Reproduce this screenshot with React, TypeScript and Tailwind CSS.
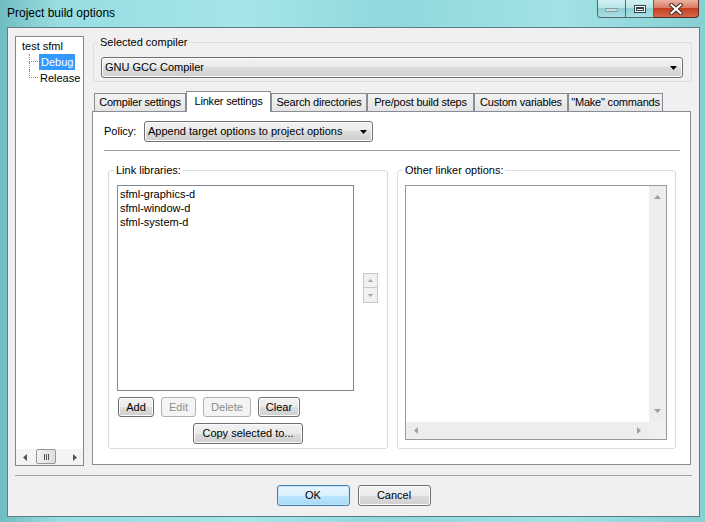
import React from "react";

const F = "font-['Liberation_Sans',Arial,sans-serif]";

function Tri({ dir, color = "#000", w = 7, h = 4 }: { dir: "up" | "down" | "left" | "right"; color?: string; w?: number; h?: number }) {
  if (dir === "down")
    return (
      <svg width={w} height={h} viewBox={`0 0 ${w} ${h}`}>
        <polygon points={`0,0 ${w},0 ${w / 2},${h}`} fill={color} />
      </svg>
    );
  if (dir === "up")
    return (
      <svg width={w} height={h} viewBox={`0 0 ${w} ${h}`}>
        <polygon points={`0,${h} ${w},${h} ${w / 2},0`} fill={color} />
      </svg>
    );
  if (dir === "left")
    return (
      <svg width={h} height={w} viewBox={`0 0 ${h} ${w}`}>
        <polygon points={`${h},0 ${h},${w} 0,${w / 2}`} fill={color} />
      </svg>
    );
  return (
    <svg width={h} height={w} viewBox={`0 0 ${h} ${w}`}>
      <polygon points={`0,0 0,${w} ${h},${w / 2}`} fill={color} />
    </svg>
  );
}

function Btn({ children, className = "", disabled = false }: { children: React.ReactNode; className?: string; disabled?: boolean }) {
  return (
    <div
      className={`flex items-center justify-center rounded-[3px] border text-[11px] leading-none ${
        disabled
          ? "border-[#adb2b5] bg-[#f4f4f4] text-[#8d8d8d]"
          : "border-[#707070] bg-[linear-gradient(#f2f2f2_0%,#ebebeb_50%,#dddddd_50%,#cfcfcf_100%)] text-black shadow-[inset_0_0_0_1px_#fbfbfb]"
      } ${className}`}
    >
      {children}
    </div>
  );
}

function Combo({ text, className = "" }: { text: string; className?: string }) {
  return (
    <div
      className={`flex h-[21px] items-center justify-between rounded-[3px] border border-[#707070] bg-[linear-gradient(#f2f2f2_0%,#ebebeb_50%,#dddddd_50%,#cfcfcf_100%)] pl-[3px] pr-[5px] shadow-[inset_0_0_0_1px_#fbfbfb] ${className}`}
    >
      <span className="text-[11px] leading-none">{text}</span>
      <Tri dir="down" />
    </div>
  );
}

function Tab({ children, className = "" }: { children: React.ReactNode; className?: string }) {
  return (
    <div
      className={`flex h-[18px] items-center justify-center whitespace-nowrap border border-b-0 border-[#898c95] bg-[linear-gradient(#f3f3f3,#e4e4e4)] text-[11px] leading-none tracking-[-0.2px] ${className}`}
    >
      {children}
    </div>
  );
}

export default function App() {
  return (
    <div
      className={`${F} flex h-[522px] w-[705px] flex-col overflow-hidden bg-[linear-gradient(90deg,#6fbcc1_0%,#98dde0_8%,#a6e5e8_35%,#8fd8dc_55%,#a3e2e5_80%,#86cfd3_100%)] text-black`}
    >
      {/* Title bar */}
      <div className="flex h-[27px] shrink-0">
        <div className="pl-[7px] pt-[5px] text-[12px] leading-[16px] text-black">Project build options</div>
        <div className="ml-auto mr-[6px] flex h-[18px]">
          <div className="flex w-[57px] overflow-hidden rounded-bl-[4px] border border-t-0 border-[#4c6b6e] bg-[linear-gradient(#d3f1f3_0%,#b4e3e6_50%,#92d0d4_50%,#a9e0e3_100%)]">
            <div className="flex w-[28px] items-center justify-center border-r border-[#4c6b6e]">
              <div className="mt-[3px] h-[4px] w-[13px] rounded-[1px] border border-[#7f9fa2] bg-[#c9dfe0]" />
            </div>
            <div className="flex flex-1 items-center justify-center">
              <div className="h-[8px] w-[12px] border border-[#2f4446] bg-white p-[1px]">
                <div className="h-full w-full border border-t-2 border-[#2f4446]" />
              </div>
            </div>
          </div>
          <div className="flex w-[45px] items-center justify-center rounded-br-[4px] border border-l-0 border-t-0 border-[#5a2b22] bg-[linear-gradient(#eab3a2_0%,#d9775f_50%,#c4411f_50%,#d7664a_100%)]">
            <svg width="14" height="12" viewBox="0 0 14 12">
              <path d="M2.5 2 L11.5 10 M11.5 2 L2.5 10" stroke="#4a2a24" strokeWidth="4.2" strokeLinecap="square" />
              <path d="M2.5 2 L11.5 10 M11.5 2 L2.5 10" stroke="#ffffff" strokeWidth="2.2" strokeLinecap="square" />
            </svg>
          </div>
        </div>
      </div>

      {/* Client */}
      <div className="ml-[7px] mr-[5px] flex h-[490px] shrink-0 flex-col border border-[#5d7d80] bg-[#f0f0f0] pl-[7px] pt-[8px]">
        <div className="flex">
          {/* Tree */}
          <div className="flex h-[430px] w-[69px] flex-col border border-[#828790] bg-white text-[11px]">
            <div className="flex-1 pt-px">
              <div className="h-[16px] pl-[6px] leading-[16px]">test sfml</div>
              <div className="flex h-[16px]">
                <div className="ml-[13px] flex w-[9px] flex-col">
                  <div className="h-[8px] border-b border-l border-dotted border-[#8e8e8e]" />
                  <div className="h-[8px] border-l border-dotted border-[#8e8e8e]" />
                </div>
                <div className="ml-px bg-[#3399ff] px-[2px] leading-[16px] text-white">Debug</div>
              </div>
              <div className="flex h-[16px]">
                <div className="ml-[13px] flex w-[9px] flex-col">
                  <div className="h-[8px] border-b border-l border-dotted border-[#8e8e8e]" />
                </div>
                <div className="ml-px px-[1px] leading-[16px]">Release</div>
              </div>
            </div>
            <div className="flex h-[16px] bg-[#f4f4f4]">
              <div className="flex w-[17px] items-center justify-center">
                <Tri dir="left" color="#555" w={7} h={4} />
              </div>
              <div className="flex flex-1">
                <div className="ml-[3px] flex h-[15px] w-[20px] items-center justify-center gap-[1px] rounded-[2px] border border-[#979797] bg-[linear-gradient(90deg,#f2f2f2,#dcdcdc)]">
                  <div className="h-[6px] w-px bg-[#555]" />
                  <div className="h-[6px] w-px bg-[#555]" />
                  <div className="h-[6px] w-px bg-[#555]" />
                </div>
              </div>
              <div className="flex w-[17px] items-center justify-center">
                <Tri dir="right" color="#555" w={7} h={4} />
              </div>
            </div>
          </div>

          {/* Right column */}
          <div className="ml-[8px] flex w-[600px] flex-col">
            <fieldset className="ml-px w-[599px] rounded-[3px] border border-[#d5dfe5] pb-[3px] pl-[7px] pr-[8px]">
              <legend className="-ml-[3px] px-[2px] text-[11px] leading-[13px]">Selected compiler</legend>
              <Combo text="GNU GCC Compiler" className="mt-[8px] w-full" />
            </fieldset>

            <div className="ml-[2px] mt-[9px] flex h-[20px] items-end">
              <Tab className="w-[92px]">Compiler settings</Tab>
              <div className="relative z-10 -mb-px flex h-[21px] w-[85px] items-start justify-center whitespace-nowrap border border-b-0 border-[#898c95] bg-white pt-[4px] text-[11px] leading-none tracking-[-0.2px]">
                Linker settings
              </div>
              <Tab className="w-[96px]">Search directories</Tab>
              <Tab className="w-[107px]">Pre/post build steps</Tab>
              <Tab className="w-[94px]">Custom variables</Tab>
              <Tab className="w-[95px]">"Make" commands</Tab>
            </div>

            <div className="flex h-[354px] w-[599px] flex-col border border-[#898c95] bg-white pl-[11px] pt-[9px] text-[11px]">
              <div className="flex h-[21px] items-center">
                <span className="w-[40px] leading-none">Policy:</span>
                <Combo text="Append target options to project options" className="w-[229px]" />
              </div>
              <div className="mt-[8px] h-px w-[576px] bg-[#a0a0a0]" />

              <div className="ml-[4px] mt-[13px] flex gap-[9px]">
                {/* Link libraries */}
                <fieldset className="flex h-[285px] w-[280px] flex-col rounded-[3px] border border-[#d5dfe5] pl-[8px] pr-[8px]">
                  <legend className="-ml-[3px] px-[2px] leading-[13px]">Link libraries:</legend>
                  <div className="mt-[8px] flex items-center">
                    <div className="h-[206px] w-[237px] border border-[#828790] bg-white pl-[2px] pt-px leading-[14px]">
                      <div>sfml-graphics-d</div>
                      <div>sfml-window-d</div>
                      <div>sfml-system-d</div>
                    </div>
                    <div className="ml-[9px] flex flex-col">
                      <div className="flex h-[15px] w-[15px] items-center justify-center border border-[#c9c9c9] bg-[#f1f1f1]">
                        <Tri dir="up" color="#a3a3a3" w={5} h={3} />
                      </div>
                      <div className="flex h-[15px] w-[15px] items-center justify-center border border-t-0 border-[#c9c9c9] bg-[#f1f1f1]">
                        <Tri dir="down" color="#a3a3a3" w={5} h={3} />
                      </div>
                    </div>
                  </div>
                  <div className="ml-px mt-[6px] flex gap-[6px]">
                    <Btn className="h-[20px] w-[36px]">Add</Btn>
                    <Btn disabled className="ml-px h-[20px] w-[35px]">Edit</Btn>
                    <Btn disabled className="ml-px h-[20px] w-[48px]">Delete</Btn>
                    <Btn className="ml-px h-[20px] w-[42px]">Clear</Btn>
                  </div>
                  <Btn className="mt-[6px] h-[21px] w-[110px] self-center">Copy selected to...</Btn>
                </fieldset>

                {/* Other linker options */}
                <fieldset className="flex h-[285px] w-[279px] flex-col rounded-[3px] border border-[#d5dfe5] pl-[7px]">
                  <legend className="-ml-[2px] px-[2px] leading-[13px]">Other linker options:</legend>
                  <div className="mt-[8px] flex h-[255px] w-[262px] flex-col border border-[#9a9a9a] bg-white">
                    <div className="flex flex-1">
                      <div className="flex-1" />
                      <div className="flex w-[17px] flex-col items-center justify-between bg-[#ededed] py-[9px]">
                        <Tri dir="up" color="#a0a0a0" w={7} h={4} />
                        <Tri dir="down" color="#a0a0a0" w={7} h={4} />
                      </div>
                    </div>
                    <div className="flex h-[17px]">
                      <div className="flex flex-1 items-center justify-between bg-[#ededed] px-[8px]">
                        <Tri dir="left" color="#a0a0a0" w={7} h={4} />
                        <Tri dir="right" color="#a0a0a0" w={7} h={4} />
                      </div>
                      <div className="w-[17px] bg-[#f0f0f0]" />
                    </div>
                  </div>
                </fieldset>
              </div>
            </div>
          </div>
        </div>

        <div className="mt-[9px] h-px w-[677px] bg-[#a0a0a0]" />
        <div className="mt-[9px] flex justify-center gap-[8px] pr-[7px]">
          <div className="flex h-[21px] w-[73px] items-center justify-center rounded-[3px] border border-[#3c7fb1] bg-[linear-gradient(#eaf6fd_0%,#d9f0fc_50%,#bee6fd_50%,#a7d9f5_100%)] text-[11px] leading-none shadow-[inset_0_0_0_1px_#c5e6f8]">
            OK
          </div>
          <Btn className="h-[21px] w-[73px]">Cancel</Btn>
        </div>
      </div>
    </div>
  );
}
